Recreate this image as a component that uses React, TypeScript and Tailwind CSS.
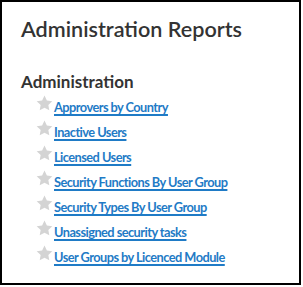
import React from "react";

const items = [
  "Approvers by Country",
  "Inactive Users",
  "Licensed Users",
  "Security Functions By User Group",
  "Security Types By User Group",
  "Unassigned security tasks",
  "User Groups by Licenced Module",
];

function Star() {
  return (
    <svg width="17" height="16" viewBox="0 0 24 23" className="shrink-0">
      <path
        d="M12 0.8l3.4 7.1 7.8 1-5.7 5.4 1.4 7.7L12 18.3 5.1 22l1.4-7.7L0.8 8.9l7.8-1z"
        fill="#d4d4d4"
      />
    </svg>
  );
}

export default function App() {
  return (
    <div className="w-[301px] h-[285px] border-2 border-black bg-white" style={{ fontFamily: "Lato, 'Open Sans', sans-serif" }}>
      <div className="pl-[19px] pt-[13px]">
        <h1 className="text-[21.6px] leading-[28px] text-[#333333] font-semibold">Administration Reports</h1>
        <h2 className="mt-[28px] text-[17px] leading-[22px] text-[#333333] font-bold">Administration</h2>
        <ul className="mt-[2px] pl-[15px] flex flex-col">
          {items.map((t) => (
            <li key={t} className="flex items-start gap-[1px] h-[25px]">
              <Star />
              <a href="#" className="mt-[3px] text-[12.8px] tracking-[-0.55px] leading-[18px] font-bold text-[#1f7bc6] underline decoration-[1.5px] underline-offset-2">
                {t}
              </a>
            </li>
          ))}
        </ul>
      </div>
    </div>
  );
}
